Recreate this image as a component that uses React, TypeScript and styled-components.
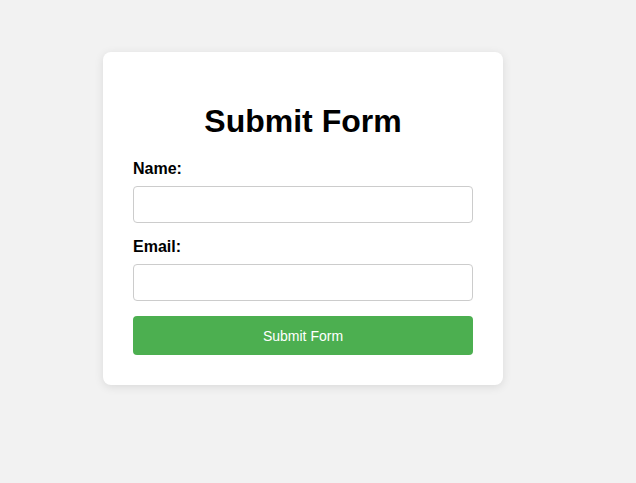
import React from "react";
import styled, { createGlobalStyle } from "styled-components";

const Global = createGlobalStyle`
  html, body { margin: 0; padding: 0; background: #f2f2f2; }
  body { font-family: "Liberation Sans", Arial, sans-serif; }
  * { box-sizing: border-box; }
`;

const Page = styled.div`
  min-height: 483px;
  padding: 52px 0 0 103px;
`;

const Card = styled.form`
  width: 400px;
  background: #ffffff;
  border-radius: 8px;
  box-shadow: 0 2px 10px rgba(0, 0, 0, 0.1);
  padding: 30px;
  display: flex;
  flex-direction: column;
`;

const Title = styled.h1`
  margin: 21px 0 20px;
  font-size: 32px;
  line-height: 37px;
  font-weight: bold;
  text-align: center;
  color: #000;
`;

const Label = styled.label`
  display: block;
  font-size: 16px;
  line-height: 18px;
  font-weight: bold;
  color: #000;
  margin-bottom: 8px;
`;

const Input = styled.input`
  display: block;
  width: 100%;
  height: 37px;
  padding: 8px;
  border: 1px solid #ccc;
  border-radius: 4px;
  font-size: 16px;
  font-family: inherit;
  margin-bottom: 15px;
  outline: none;
`;

const Button = styled.button`
  width: 100%;
  height: 39px;
  border: none;
  border-radius: 4px;
  background: #4caf50;
  color: #ffffff;
  font-size: 14px;
  font-family: inherit;
  cursor: pointer;
`;

export default function App() {
  return (
    <>
      <Global />
      <Page>
        <Card onSubmit={(e) => e.preventDefault()}>
          <Title>Submit Form</Title>
          <Label htmlFor="name">Name:</Label>
          <Input id="name" type="text" />
          <Label htmlFor="email">Email:</Label>
          <Input id="email" type="email" />
          <Button type="submit">Submit Form</Button>
        </Card>
      </Page>
    </>
  );
}
